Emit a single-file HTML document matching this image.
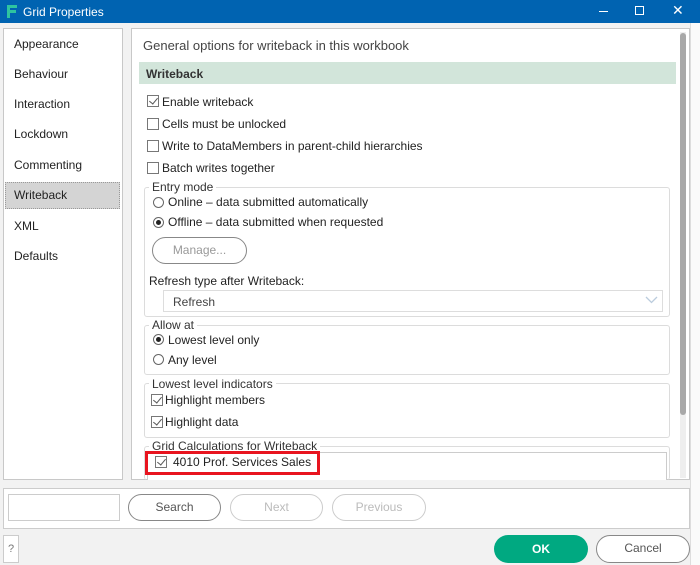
<!DOCTYPE html>
<html><head><style>
*{box-sizing:border-box;margin:0;padding:0}
body{width:700px;height:565px;background:#f2f2f2;font-family:"Liberation Sans",sans-serif;font-size:12px;color:#222;position:relative;overflow:hidden}
.a{position:absolute}
.title{left:0;top:0;width:700px;height:23px;background:#0063b1;color:#fff}
.panel{background:#fff;border:1px solid #c8c8c8}
.nav{left:14px;font-size:12px;color:#222}
.cb{width:12px;height:12px;border:1px solid #777;background:#fff}
.cb.c::after{content:"";position:absolute;left:3px;top:0px;width:4px;height:7px;border:solid #555;border-width:0 1.3px 1.3px 0;transform:rotate(40deg)}
.rd{width:11px;height:11px;border:1px solid #666;border-radius:50%;background:#fff}
.rd.c::after{content:"";position:absolute;left:2px;top:2px;width:5px;height:5px;border-radius:50%;background:#222}
.grp{border:1px solid #dcdcdc;border-radius:3px}
.leg{background:#fff;padding:0 3px;font-size:12px;color:#333}
.btn{border:1.5px solid #888;border-radius:14px;background:#fff;text-align:center;line-height:25px;color:#555}
.btn.d{border-color:#ccc;color:#bbb}
</style></head><body>
<div class="a title">
 <svg class="a" style="left:6px;top:4px" width="12" height="15" viewBox="0 0 12 15"><path d="M1 1h10v3H4v2h6v3H4v5H1z" fill="#2ec4a0"/></svg>
 <div class="a" style="left:23px;top:5px;font-size:12px">Grid Properties</div>
 <div class="a" style="left:599px;top:11px;width:9px;height:1px;background:#fff"></div>
 <div class="a" style="left:635px;top:6px;width:9px;height:9px;border:1px solid #fff"></div>
 <div class="a" style="left:672px;top:2px;font-size:14px">✕</div>
</div>
<div class="a" style="left:690px;top:23px;width:10px;height:542px;background:#fafafa;border-left:1px solid #ddd"></div>
<div class="a panel" style="left:3px;top:28px;width:120px;height:452px"></div>
<div class="a nav" style="top:37px">Appearance</div>
<div class="a nav" style="top:67px">Behaviour</div>
<div class="a nav" style="top:97px">Interaction</div>
<div class="a nav" style="top:127px">Lockdown</div>
<div class="a nav" style="top:158px">Commenting</div>
<div class="a" style="left:5px;top:182px;width:115px;height:27px;background:#d4d4d4;border:1px dotted #999"></div>
<div class="a nav" style="top:188px">Writeback</div>
<div class="a nav" style="top:219px">XML</div>
<div class="a nav" style="top:249px">Defaults</div>

<div class="a panel" style="left:131px;top:28px;width:559px;height:452px"></div>
<div class="a" style="left:680px;top:32px;width:6px;height:446px;background:#eee"></div>
<div class="a" style="left:680px;top:33px;width:6px;height:382px;background:#a8a8a8;border-radius:3px"></div>
<div class="a" style="left:143px;top:38px;font-size:13px;color:#444">General options for writeback in this workbook</div>
<div class="a" style="left:139px;top:62px;width:537px;height:22px;background:#d2e5da"></div>
<div class="a" style="left:146px;top:67px;font-weight:bold;color:#333">Writeback</div>

<div class="a cb c" style="left:147px;top:95px"></div><div class="a" style="left:162px;top:95px">Enable writeback</div>
<div class="a cb" style="left:147px;top:118px"></div><div class="a" style="left:162px;top:117px">Cells must be unlocked</div>
<div class="a cb" style="left:147px;top:140px"></div><div class="a" style="left:162px;top:139px">Write to DataMembers in parent-child hierarchies</div>
<div class="a cb" style="left:147px;top:162px"></div><div class="a" style="left:162px;top:161px">Batch writes together</div>

<div class="a grp" style="left:144px;top:187px;width:526px;height:130px"></div>
<div class="a leg" style="left:149px;top:180px">Entry mode</div>
<div class="a rd" style="left:153px;top:197px"></div><div class="a" style="left:168px;top:195px">Online – data submitted automatically</div>
<div class="a rd c" style="left:153px;top:217px"></div><div class="a" style="left:168px;top:215px">Offline – data submitted when requested</div>
<div class="a btn" style="left:152px;top:237px;width:95px;height:27px;color:#999">Manage...</div>
<div class="a" style="left:149px;top:274px">Refresh type after Writeback:</div>
<div class="a" style="left:163px;top:290px;width:500px;height:22px;border:1px solid #ddd;background:#fff"></div>
<div class="a" style="left:173px;top:295px;color:#444">Refresh</div>
<svg class="a" style="left:645px;top:296px" width="13" height="8"><path d="M1 1l5.5 5.5L12 1" stroke="#bcd" stroke-width="1.3" fill="none"/></svg>

<div class="a grp" style="left:144px;top:325px;width:526px;height:50px"></div>
<div class="a leg" style="left:149px;top:318px">Allow at</div>
<div class="a rd c" style="left:153px;top:334px"></div><div class="a" style="left:168px;top:333px">Lowest level only</div>
<div class="a rd" style="left:153px;top:354px"></div><div class="a" style="left:168px;top:353px">Any level</div>

<div class="a grp" style="left:144px;top:383px;width:526px;height:55px"></div>
<div class="a leg" style="left:149px;top:377px">Lowest level indicators</div>
<div class="a cb c" style="left:151px;top:394px"></div><div class="a" style="left:165px;top:393px">Highlight members</div>
<div class="a cb c" style="left:151px;top:416px"></div><div class="a" style="left:165px;top:415px">Highlight data</div>

<div class="a grp" style="left:144px;top:446px;width:526px;height:34px;border-bottom:none"></div>
<div class="a leg" style="left:149px;top:439px">Grid Calculations for Writeback</div>
<div class="a" style="left:147px;top:452px;width:520px;height:28px;border:1px solid #ccc;border-bottom:none;background:#fff"></div>
<div class="a" style="left:145px;top:451px;width:175px;height:24px;border:3px solid #e8141f"></div>
<div class="a cb c" style="left:155px;top:456px"></div><div class="a" style="left:173px;top:455px">4010 Prof. Services Sales</div>

<div class="a" style="left:3px;top:488px;width:687px;height:41px;background:#fff;border:1px solid #ccc"></div>
<div class="a" style="left:8px;top:494px;width:112px;height:27px;border:1px solid #ccc;background:#fff"></div>
<div class="a btn" style="left:128px;top:494px;width:93px;height:27px">Search</div>
<div class="a btn d" style="left:230px;top:494px;width:93px;height:27px">Next</div>
<div class="a btn d" style="left:332px;top:494px;width:94px;height:27px">Previous</div>

<div class="a" style="left:3px;top:535px;width:16px;height:28px;border:1px solid #ccc;background:#fff;color:#777;text-align:center;line-height:26px;font-size:11px">?</div>
<div class="a" style="left:494px;top:535px;width:94px;height:28px;background:#00a981;border-radius:14px;color:#fff;font-weight:bold;text-align:center;line-height:28px">OK</div>
<div class="a btn" style="left:596px;top:535px;width:94px;height:28px;line-height:25px;color:#555">Cancel</div>
</body></html>
